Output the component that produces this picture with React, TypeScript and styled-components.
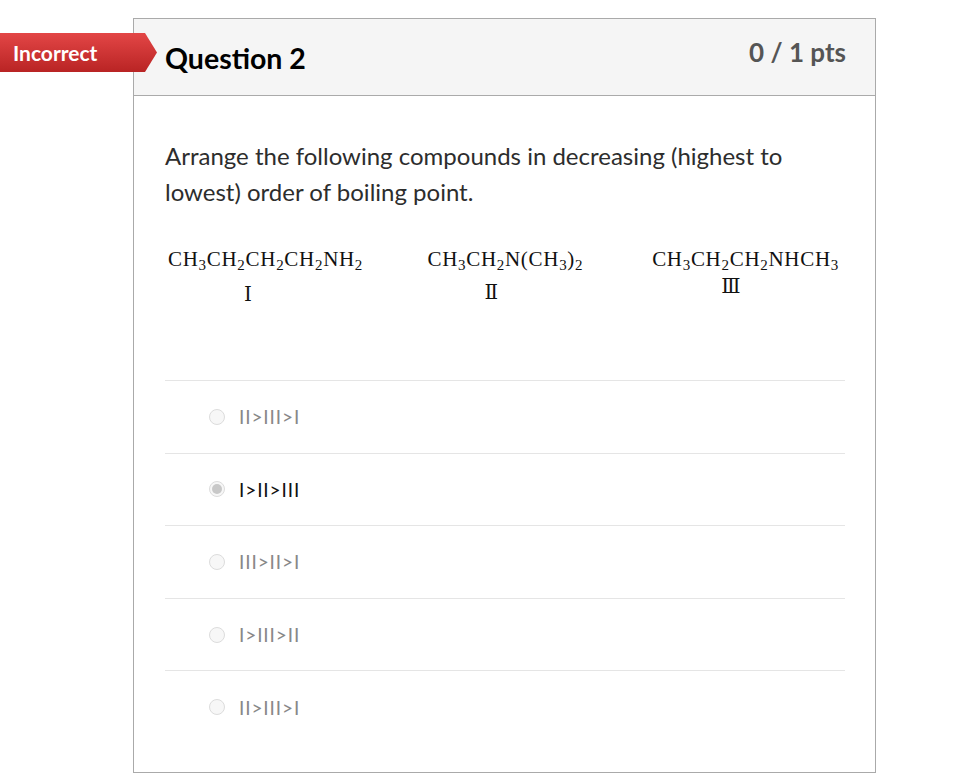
import React from 'react';
import styled, { createGlobalStyle } from 'styled-components';

const GlobalStyle = createGlobalStyle`
  body {
    margin: 0;
    background: #fff;
    font-family: Lato, 'Open Sans', sans-serif;
  }
`;

const SPage = styled.div`
  position: relative;
  padding: 18px 0 0 133px;
  height: 778px;
  box-sizing: border-box;
`;

const SCard = styled.div`
  width: 743px;
  height: 755px;
  box-sizing: border-box;
  border: 1px solid #aaaaaa;
  background: #fff;
`;

const SHeader = styled.div`
  display: flex;
  justify-content: space-between;
  align-items: flex-start;
  height: 77px;
  box-sizing: border-box;
  padding: 0 29px 0 31px;
  background: #f5f5f5;
  border-bottom: 1px solid #aaaaaa;
`;

const STitle = styled.h2`
  margin: 22px 0 0;
  font-family: Lato, sans-serif;
  font-weight: 700;
  font-size: 28.5px;
  color: #000;
`;

const SPoints = styled.div`
  margin-top: 17px;
  font-family: Lato, sans-serif;
  font-weight: 700;
  font-size: 26px;
  color: #555555;
`;

const SBanner = styled.div`
  position: absolute;
  left: 0;
  top: 33px;
  width: 157px;
  height: 39px;
  display: flex;
  align-items: center;
  padding-left: 13px;
  box-sizing: border-box;
  color: #fff;
  font-family: Lato, sans-serif;
  font-weight: 700;
  font-size: 21px;
  background: linear-gradient(#e34646, #b92424);
  clip-path: polygon(0 0, 145px 0, 157px 50%, 145px 100%, 0 100%);
`;

const SBody = styled.div`
  padding: 42px 30px 0 31px;
`;

const SQuestion = styled.p`
  margin: 0;
  font-size: 24px;
  line-height: 36px;
  color: #2d2d2d;
`;

const SCompounds = styled.div`
  display: flex;
  margin-top: 37px;
  padding-left: 3px;
  height: 133px;
`;

const SCompound = styled.div<{ $width: number; $labelShift: number; $labelTop: number }>`
  width: ${({ $width }) => $width}px;
  font-family: 'Liberation Serif', 'DejaVu Serif', serif;
  color: #111;
  & > div:first-child {
    font-size: 21px;
    letter-spacing: 0.7px;
    white-space: nowrap;
  }
  & > div:last-child {
    margin-top: ${({ $labelTop }) => $labelTop}px;
    font-size: 20px;
    padding-left: ${({ $labelShift }) => $labelShift}px;
  }
  sub {
    font-size: 15px;
    vertical-align: -4px;
    line-height: 0;
  }
`;

const SAnswer = styled.div`
  display: flex;
  align-items: center;
  height: 72.6px;
  border-top: 1px solid #e5e5e5;
  padding-left: 44px;
  box-sizing: border-box;
`;

const SRadio = styled.span<{ $checked?: boolean }>`
  width: 16px;
  height: 16px;
  border-radius: 50%;
  border: 1px solid #dcdcdc;
  background: #f7f7f7;
  box-sizing: border-box;
  display: flex;
  align-items: center;
  justify-content: center;
  margin-right: 14px;
  &::after {
    content: '';
    display: ${({ $checked }) => ($checked ? 'block' : 'none')};
    width: 10px;
    height: 10px;
    border-radius: 50%;
    background: #c8c8c8;
  }
`;

const SLabel = styled.span<{ $checked?: boolean }>`
  font-size: 19px;
  color: ${({ $checked }) => ($checked ? '#111' : '#888')};
  letter-spacing: 0.9px;
`;

const compounds = [
  { width: 269, shift: 76, top: 10, formula: <>CH<sub>3</sub>CH<sub>2</sub>CH<sub>2</sub>CH<sub>2</sub>NH<sub>2</sub></>, label: 'Ⅰ' },
  { width: 233, shift: 57, top: 8, formula: <>CH<sub>3</sub>CH<sub>2</sub>N(CH<sub>3</sub>)<sub>2</sub></>, label: 'Ⅱ' },
  { width: 200, shift: 69, top: 2, formula: <>CH<sub>3</sub>CH<sub>2</sub>CH<sub>2</sub>NHCH<sub>3</sub></>, label: 'Ⅲ' },
];

const answers = [
  { text: 'II>III>I' },
  { text: 'I>II>III', checked: true },
  { text: 'III>II>I' },
  { text: 'I>III>II' },
  { text: 'II>III>I' },
];

export default function App() {
  return (
    <>
      <GlobalStyle />
      <SPage>
        <SCard>
          <SHeader>
            <STitle>Question 2</STitle>
            <SPoints>0 / 1 pts</SPoints>
          </SHeader>
          <SBody>
            <SQuestion>
              Arrange the following compounds in decreasing (highest to
              <br />
              lowest) order of boiling point.
            </SQuestion>
            <SCompounds>
              {compounds.map((c) => (
                <SCompound key={c.label} $width={c.width} $labelShift={c.shift} $labelTop={c.top}>
                  <div>{c.formula}</div>
                  <div>{c.label}</div>
                </SCompound>
              ))}
            </SCompounds>
            {answers.map((a, i) => (
              <SAnswer key={i}>
                <SRadio $checked={a.checked} />
                <SLabel $checked={a.checked}>{a.text}</SLabel>
              </SAnswer>
            ))}
          </SBody>
        </SCard>
        <SBanner>Incorrect</SBanner>
      </SPage>
    </>
  );
}
